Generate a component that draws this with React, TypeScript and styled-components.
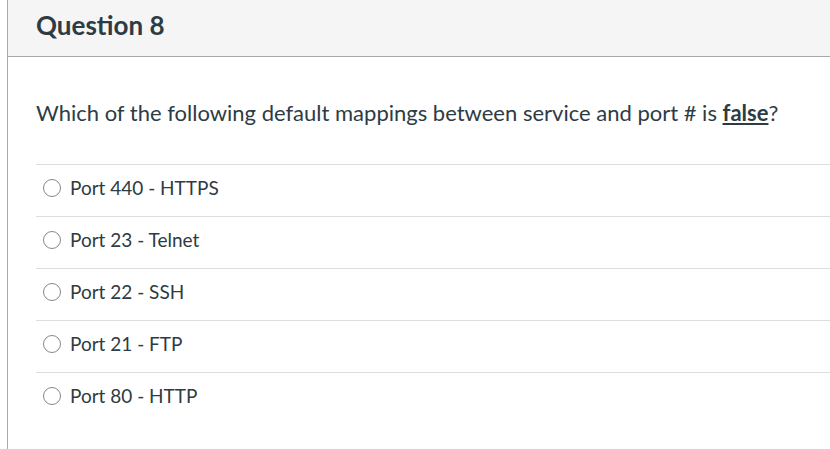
import styled, { createGlobalStyle } from 'styled-components';

const GlobalStyle = createGlobalStyle`
  html, body {
    margin: 0;
    padding: 0;
    background: #ffffff;
  }
  body {
    font-family: Lato, 'Liberation Sans', sans-serif;
    color: #2d3b45;
  }
`;

const answers = [
  'Port 440 - HTTPS',
  'Port 23 - Telnet',
  'Port 22 - SSH',
  'Port 21 - FTP',
  'Port 80 - HTTP',
];

const App = () => {
  return (
    <>
      <GlobalStyle />
      <QuestionCard>
        <Header>
          <Title>Question 8</Title>
        </Header>
        <Body>
          <QuestionText>
            Which of the following default mappings between service and port # is{' '}
            <Strong>false</Strong>?
          </QuestionText>
          <AnswerList>
            {answers.map((a) => (
              <AnswerRow key={a}>
                <Radio type="radio" name="q8" />
                <AnswerLabel>{a}</AnswerLabel>
              </AnswerRow>
            ))}
          </AnswerList>
        </Body>
      </QuestionCard>
    </>
  );
};

export default App;

const QuestionCard = styled.div`
  margin-left: 7px;
  border-left: 1px solid #aaaaaa;
  height: 449px;
  box-sizing: border-box;
`;

const Header = styled.div`
  background: #f5f5f5;
  border-bottom: 1px solid #aaaaaa;
  height: 57px;
  box-sizing: border-box;
  padding: 0 0 6px 28px;
  display: flex;
  align-items: center;
`;

const Title = styled.h2`
  margin: 0;
  font-size: 26px;
  font-weight: 700;
  color: #2d3b45;
  line-height: 1;
`;

const Body = styled.div`
  padding: 41px 0 0 28px;
`;

const QuestionText = styled.div`
  font-size: 22px;
  line-height: 30px;
  color: #2d3b45;
`;

const Strong = styled.span`
  font-weight: 700;
  text-decoration: underline;
`;

const AnswerList = styled.div`
  margin-top: 36px;
`;

const AnswerRow = styled.label`
  display: flex;
  align-items: center;
  height: 52px;
  box-sizing: border-box;
  border-top: 1px solid #dddddd;
  padding: 0 0 6px 7px;
`;

const Radio = styled.input`
  appearance: none;
  width: 18px;
  height: 18px;
  margin: 0 9px 0 0;
  border: 1px solid #888888;
  border-radius: 50%;
  background: #ffffff;
  box-sizing: border-box;
`;

const AnswerLabel = styled.span`
  font-size: 19px;
  color: #2d3b45;
`;
